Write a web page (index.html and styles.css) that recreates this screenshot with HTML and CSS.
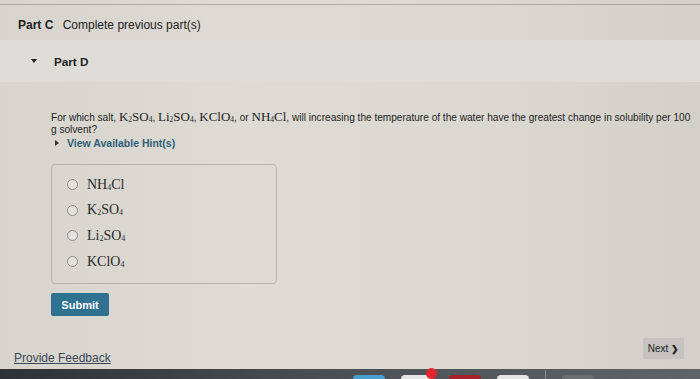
FILE: index.html
```html
<!DOCTYPE html>
<html>

<head>
    <title>Part D</title>
    <link rel="stylesheet" href="styles.css">
</head>

<body>
    <div class="screen">
        <div class="top-rule"></div>

        <div class="part-row">
            <span class="part-label">Part C</span>
            <span class="part-note">Complete previous part(s)</span>
        </div>

        <div class="part-head">
            <span class="caret-down"></span>
            <span class="part-label">Part D</span>
        </div>

        <div class="question">
            <p class="prompt">
                For which salt, <span class="chem">K<sub>2</sub>SO<sub>4</sub></span>,
                <span class="chem">Li<sub>2</sub>SO<sub>4</sub></span>,
                <span class="chem">KClO<sub>4</sub></span>, or
                <span class="chem">NH<sub>4</sub>Cl</span>, will increasing the temperature of the water have the greatest change in solubility per 100 g solvent?
            </p>

            <div class="hints">
                <span class="caret-right"></span>
                <span>View Available Hint(s)</span>
            </div>

            <div class="choices">
                <label class="choice"><span class="radio"></span><span class="chem">NH<sub>4</sub>Cl</span></label>
                <label class="choice"><span class="radio"></span><span class="chem">K<sub>2</sub>SO<sub>4</sub></span></label>
                <label class="choice"><span class="radio"></span><span class="chem">Li<sub>2</sub>SO<sub>4</sub></span></label>
                <label class="choice"><span class="radio"></span><span class="chem">KClO<sub>4</sub></span></label>
            </div>

            <button type="button" class="submit">Submit</button>
        </div>

        <div class="footer">
            <a class="feedback" href="#">Provide Feedback</a>
            <button type="button" class="next">Next <span class="chev">&#10095;</span></button>
        </div>
    </div>

    <div class="dock">
        <span class="dock-icon blue"></span>
        <span class="dock-icon white"><span class="badge"></span></span>
        <span class="dock-icon red"></span>
        <span class="dock-icon white"></span>
        <span class="dock-sep"></span>
        <span class="dock-icon grey"></span>
    </div>
</body>

</html>
```

FILE: styles.css
```css
body {
    font-family: "Liberation Sans", Arial, sans-serif;
    background-color: #3f4447;
    margin: 0;
    padding: 0;
}

.screen {
    height: 369px;
    background: linear-gradient(90deg, #d6d4cd 0%, #dddbd4 35%, #dad8d1 70%, #d2d0c9 100%);
    display: flex;
    flex-direction: column;
    box-sizing: border-box;
    padding-top: 4px;
    color: #222;
}

.top-rule {
    height: 1px;
    background-color: #a9a8a3;
    margin-bottom: 12px;
}

.part-row {
    padding-left: 18px;
    font-size: 12px;
    height: 16px;
    line-height: 16px;
}

.part-label {
    font-weight: bold;
}

.part-note {
    margin-left: 6px;
}

.part-head {
    margin-top: 7px;
    height: 42px;
    display: flex;
    align-items: center;
    font-size: 11.7px;
    background-color: #dedcd6;
    padding-left: 31px;
}

.caret-down {
    width: 0;
    height: 0;
    border-left: 3.5px solid transparent;
    border-right: 3.5px solid transparent;
    border-top: 4px solid #222;
    margin-right: 17px;
}

.question {
    padding-left: 51px;
    padding-right: 8px;
}

.prompt {
    font-size: 10.1px;
    line-height: 12px;
    margin: 29px 0 0;
    color: #1e1e1e;
}

.chem {
    font-family: "Liberation Serif", "Times New Roman", serif;
    font-size: 13px;
}

.chem sub {
    font-size: 7.5px;
    line-height: 1;
    vertical-align: -1px;
}

.hints {
    height: 12px;
    margin-top: 1px;
    display: flex;
    align-items: center;
    font-size: 10.5px;
    font-weight: bold;
    color: #2f5f78;
    margin-left: 4px;
}

.caret-right {
    width: 0;
    height: 0;
    border-top: 3.5px solid transparent;
    border-bottom: 3.5px solid transparent;
    border-left: 4px solid #333;
    margin-right: 8px;
}

.choices {
    margin-top: 15px;
    width: 226px;
    height: 120px;
    border: 1px solid #b5b3ad;
    border-radius: 4px;
    box-sizing: border-box;
    padding: 10px 0 0 15px;
    display: flex;
    flex-direction: column;
    gap: 6.7px;
}

.choice {
    display: flex;
    align-items: center;
    height: 19px;
    color: #2a2a2a;
}

.choice .chem {
    font-size: 14px;
}

.choice .chem sub {
    font-size: 8px;
}

.radio {
    width: 9px;
    height: 9px;
    border: 1px solid #8d8c88;
    border-radius: 50%;
    background-color: #e4e2dc;
    margin-right: 9px;
}

.submit {
    margin-top: 9px;
    width: 58px;
    height: 23px;
    background-color: #2f7190;
    color: #fff;
    border: none;
    border-radius: 2px;
    font-family: "Liberation Sans", Arial, sans-serif;
    font-size: 11px;
    font-weight: bold;
    padding: 0;
}

.footer {
    margin-top: auto;
    display: flex;
    justify-content: space-between;
    align-items: flex-end;
    padding: 0 16px 4px 14px;
}

.feedback {
    font-size: 12px;
    color: #3b4658;
    text-decoration: underline;
}

.next {
    width: 41px;
    height: 21px;
    margin-bottom: 6px;
    background-color: #c4c3bf;
    border: none;
    border-radius: 1px;
    font-family: "Liberation Sans", Arial, sans-serif;
    font-size: 10px;
    color: #222;
    padding: 0;
}

.chev {
    font-size: 9px;
    font-weight: bold;
}

.dock {
    height: 10px;
    background: linear-gradient(90deg, #2d3236 0%, #4b5154 50%, #5f6466 100%);
    display: flex;
    align-items: flex-end;
    padding-left: 353px;
    gap: 16px;
}

.dock-icon {
    position: relative;
    width: 32px;
    height: 4px;
    border-radius: 5px 5px 0 0;
}

.dock-icon.blue {
    background-color: #4a9fd0;
}

.dock-icon.white {
    background-color: #e5e5e5;
}

.dock-icon.red {
    background-color: #a5202c;
}

.dock-icon.grey {
    background-color: #6c6f70;
}

.badge {
    position: absolute;
    right: -4px;
    top: -7px;
    width: 11px;
    height: 11px;
    border-radius: 50%;
    background-color: #e0262b;
}

.dock-sep {
    width: 1px;
    height: 9px;
    background-color: #8a8e90;
}
```
